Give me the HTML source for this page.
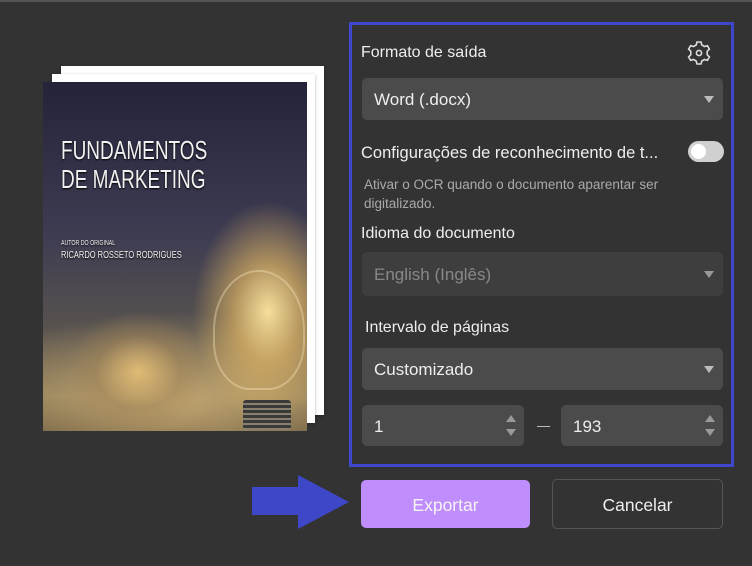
<!DOCTYPE html>
<html><head><meta charset="utf-8"><style>
*{margin:0;padding:0;box-sizing:border-box}
body{width:752px;height:566px;background:#333;position:relative;overflow:hidden;font-family:"Liberation Sans",sans-serif;color:#eee}
.top{position:absolute;left:0;top:0;width:752px;height:2px;background:#555}
.abs{position:absolute}
.page{background:#fff;box-shadow:0 1px 3px rgba(0,0,0,.3)}
.cover{left:43px;top:82px;width:264px;height:349px;overflow:hidden;
background:
radial-gradient(ellipse 75px 110px at 225px 230px,rgba(255,230,160,.95),rgba(230,185,100,.65) 45%,rgba(120,100,90,0) 100%),
radial-gradient(ellipse 70px 60px at 95px 290px,rgba(235,195,120,.85),rgba(160,130,85,.45) 60%,rgba(0,0,0,0) 100%),
radial-gradient(ellipse 220px 90px at 130px 320px,rgba(210,180,120,.75),rgba(0,0,0,0) 100%),
linear-gradient(#23233a 0%,#3f3d52 45%,#57524f 70%,#8c7a58 90%,#6a5a40 100%)}
.t{font-family:"Liberation Sans Narrow","Liberation Sans",sans-serif;color:#f2f2f2;text-shadow:0 1px 2px #000;white-space:nowrap}
.lbl{position:absolute;left:361px;font-size:16px;color:#eee}
.sel{position:absolute;left:362px;width:361px;border-radius:5px;background:#4b4b4b;font-size:17px;padding-left:12px;padding-top:2px;display:flex;align-items:center;color:#eee}
.tri{position:absolute;right:9px;top:50%;margin-top:-3px;width:0;height:0;border-left:5px solid transparent;border-right:5px solid transparent;border-top:7px solid #bbb}
.spin{position:absolute;right:8px;width:0;height:0;border-left:5px solid transparent;border-right:5px solid transparent}
</style></head><body>
<div class="top"></div>
<div class="abs page" style="left:61px;top:66px;width:263px;height:349px"></div>
<div class="abs page" style="left:52px;top:74px;width:263px;height:349px"></div>
<div class="abs cover">
 <div class="abs t" style="left:18px;top:54px;font-size:26px;line-height:29px;transform:scaleX(.73);transform-origin:left">FUNDAMENTOS<br>DE MARKETING</div>
 <div class="abs t" style="left:18px;top:158px;font-size:7px;transform:scaleX(.75);transform-origin:left">AUTOR DO ORIGINAL</div>
 <div class="abs t" style="left:18px;top:168px;font-size:10px;transform:scaleX(.75);transform-origin:left">RICARDO ROSSETO RODRIGUES</div>
 <div class="abs" style="left:170px;top:188px;width:92px;height:120px;border-radius:50% 50% 40% 40%;border:2px solid rgba(255,240,200,.35)"></div>
 <div class="abs" style="left:200px;top:318px;width:48px;height:30px;background:repeating-linear-gradient(#3a3a3a 0 3px,#8a8070 3px 5px);border-radius:3px"></div>
</div>
<div class="abs" style="left:349px;top:22px;width:385px;height:445px;border:3px solid #3f48cc"></div>
<div class="lbl" style="top:44px">Formato de saída</div>
<svg class="abs" style="left:686px;top:40px" width="26" height="26" viewBox="0 0 26 26"><path fill="none" stroke="#ddd" stroke-width="1.6" d="M11 2h4l.8 3 2.6 1.5 3-.8 2 3.4-2.2 2.2v3.4l2.2 2.2-2 3.4-3-.8-2.6 1.5-.8 3h-4l-.8-3-2.6-1.5-3 .8-2-3.4 2.2-2.2v-3.4L2.6 9.1l2-3.4 3 .8L10.2 5z"/><circle cx="13" cy="13" r="2.6" fill="none" stroke="#ddd" stroke-width="1.6"/></svg>
<div class="sel" style="top:78px;height:42px">Word (.docx)<span class="tri"></span></div>
<div class="lbl" style="top:144px;font-size:16.5px">Configurações de reconhecimento de t...</div>
<div class="abs" style="left:688px;top:141px;width:36px;height:21px;border-radius:11px;background:#d0d0d0"><div class="abs" style="left:3px;top:3px;width:15px;height:15px;border-radius:50%;background:#fff"></div></div>
<div class="abs" style="left:364px;top:175px;font-size:13.5px;line-height:19px;color:#aaa">Ativar o OCR quando o documento aparentar ser<br>digitalizado.</div>
<div class="lbl" style="top:225px">Idioma do documento</div>
<div class="sel" style="top:252px;height:44px;background:#3e3e3e;color:#888">English (Inglês)<span class="tri" style="border-top-color:#999"></span></div>
<div class="lbl" style="top:319px;left:365px">Intervalo de páginas</div>
<div class="sel" style="top:348px;height:42px">Customizado<span class="tri"></span></div>
<div class="sel" style="top:405px;height:41px;width:162px">1<span class="spin" style="top:10px;border-bottom:7px solid #999"></span><span class="spin" style="top:24px;border-top:7px solid #999"></span></div>
<div class="abs" style="left:537px;top:426px;width:13px;height:1px;background:#bbb"></div>
<div class="sel" style="top:405px;height:41px;left:561px;width:162px">193<span class="spin" style="top:10px;border-bottom:7px solid #999"></span><span class="spin" style="top:24px;border-top:7px solid #999"></span></div>
<svg class="abs" style="left:250px;top:474px" width="102" height="56"><path fill="#3d47c8" d="M2 13h46V1l51 27-51 27V41H2z"/></svg>
<div class="abs" style="left:361px;top:480px;width:169px;height:48px;border-radius:5px;background:#c08dfc;color:#f4f4f4;font-size:17.5px;display:flex;align-items:center;justify-content:center;padding-top:2px">Exportar</div>
<div class="abs" style="left:552px;top:479px;width:171px;height:50px;border-radius:5px;border:1px solid #555;color:#eee;font-size:17.5px;display:flex;align-items:center;justify-content:center;padding-top:2px">Cancelar</div>
</body></html>
